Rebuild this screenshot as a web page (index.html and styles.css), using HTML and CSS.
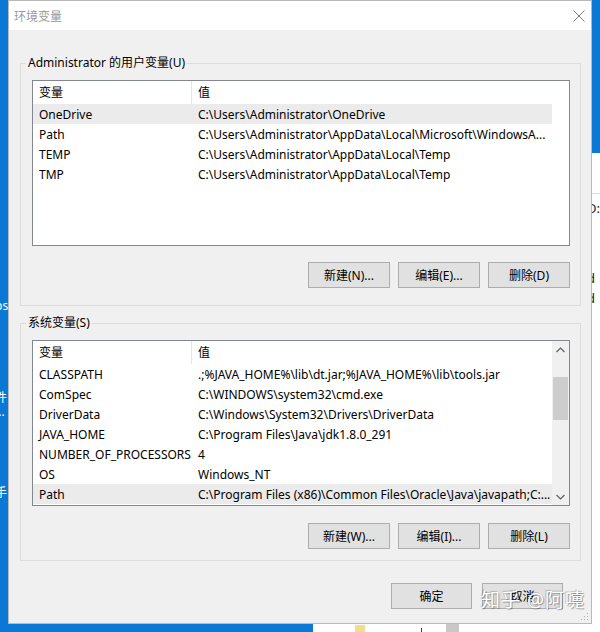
FILE: index.html
```html
<!DOCTYPE html>
<html lang="zh-CN">
<head>
    <meta charset="UTF-8">
    <title>环境变量</title>
    <link rel="stylesheet" href="styles.css">
</head>
<body>
    <div class="desktop">
        <span class="desk-label" style="top: 298px">ps</span>
        <span class="desk-label" style="top: 390px">件</span>
        <span class="desk-label" style="top: 404px">...</span>
        <span class="desk-label" style="top: 485px">手</span>

        <div class="back-window">
            <div class="back-rule"></div>
            <p class="back-text" style="top: 47px">D:</p>
            <p class="back-text" style="top: 117px">d</p>
            <p class="back-text" style="top: 137px">d</p>
            <span class="back-folder"></span>
            <span class="back-tick"></span>
            <span class="back-block"></span>
        </div>

        <div class="dialog">
            <div class="titlebar">
                <span class="title">环境变量</span>
                <svg class="close" width="12" height="12" viewBox="0 0 12 12">
                    <path d="M0.5 0.5 L11.5 11.5 M11.5 0.5 L0.5 11.5" stroke="#7a7a7a" stroke-width="1" fill="none"/>
                </svg>
            </div>

            <div class="dialog-body">
                <fieldset class="group group-user">
                    <legend>Administrator 的用户变量(U)</legend>
                    <div class="listview">
                        <div class="list-main">
                            <div class="list-head">
                                <div class="col-name">变量</div>
                                <div class="col-value">值</div>
                            </div>
                            <div class="row selected"><div class="col-name">OneDrive</div><div class="col-value">C:\Users\Administrator\OneDrive</div></div>
                            <div class="row"><div class="col-name">Path</div><div class="col-value">C:\Users\Administrator\AppData\Local\Microsoft\WindowsA...</div></div>
                            <div class="row"><div class="col-name">TEMP</div><div class="col-value">C:\Users\Administrator\AppData\Local\Temp</div></div>
                            <div class="row"><div class="col-name">TMP</div><div class="col-value">C:\Users\Administrator\AppData\Local\Temp</div></div>
                        </div>
                        <div class="list-spacer"></div>
                    </div>
                    <div class="btn-row">
                        <button class="btn">新建(N)...</button>
                        <button class="btn">编辑(E)...</button>
                        <button class="btn">删除(D)</button>
                    </div>
                </fieldset>

                <fieldset class="group group-system">
                    <legend>系统变量(S)</legend>
                    <div class="listview">
                        <div class="list-main">
                            <div class="list-head">
                                <div class="col-name">变量</div>
                                <div class="col-value">值</div>
                            </div>
                            <div class="row"><div class="col-name">CLASSPATH</div><div class="col-value">.;%JAVA_HOME%\lib\dt.jar;%JAVA_HOME%\lib\tools.jar</div></div>
                            <div class="row"><div class="col-name">ComSpec</div><div class="col-value">C:\WINDOWS\system32\cmd.exe</div></div>
                            <div class="row"><div class="col-name">DriverData</div><div class="col-value">C:\Windows\System32\Drivers\DriverData</div></div>
                            <div class="row"><div class="col-name">JAVA_HOME</div><div class="col-value">C:\Program Files\Java\jdk1.8.0_291</div></div>
                            <div class="row"><div class="col-name">NUMBER_OF_PROCESSORS</div><div class="col-value">4</div></div>
                            <div class="row"><div class="col-name">OS</div><div class="col-value">Windows_NT</div></div>
                            <div class="row selected"><div class="col-name">Path</div><div class="col-value">C:\Program Files (x86)\Common Files\Oracle\Java\javapath;C:...</div></div>
                        </div>
                        <div class="vscroll">
                            <div class="arrow">
                                <svg width="9" height="6" viewBox="0 0 9 6"><path d="M0.5 5 L4.5 1 L8.5 5" stroke="#606060" stroke-width="1.2" fill="none"/></svg>
                            </div>
                            <div class="track"><div class="thumb"></div></div>
                            <div class="arrow">
                                <svg width="9" height="6" viewBox="0 0 9 6"><path d="M0.5 1 L4.5 5 L8.5 1" stroke="#606060" stroke-width="1.2" fill="none"/></svg>
                            </div>
                        </div>
                    </div>
                    <div class="btn-row">
                        <button class="btn">新建(W)...</button>
                        <button class="btn">编辑(I)...</button>
                        <button class="btn">删除(L)</button>
                    </div>
                </fieldset>

                <div class="dialog-buttons">
                    <button class="btn btn-wide">确定</button>
                    <button class="btn btn-wide">取消</button>
                </div>
            </div>

            <span class="watermark">知乎 @阿嚏</span>
            <svg class="grip" width="8" height="8" viewBox="0 0 8 8">
                <rect x="6" y="0" width="1" height="1" fill="#b0b0b0"/>
                <rect x="3" y="3" width="1" height="1" fill="#b0b0b0"/>
                <rect x="6" y="3" width="1" height="1" fill="#b0b0b0"/>
                <rect x="0" y="6" width="1" height="1" fill="#b0b0b0"/>
                <rect x="3" y="6" width="1" height="1" fill="#b0b0b0"/>
                <rect x="6" y="6" width="1" height="1" fill="#b0b0b0"/>
            </svg>
        </div>
    </div>
</body>
</html>
```

FILE: styles.css
```css
body {
    margin: 0;
    padding: 0;
    font-family: "Noto Sans", "Noto Sans CJK SC", sans-serif;
    font-size: 12px;
    color: #000;
    overflow: hidden;
}
.desktop {
    position: relative;
    width: 600px;
    height: 632px;
    background-color: #0a78d4; /* bleu bureau */
    overflow: hidden;
}
.desk-label {
    position: absolute;
    left: -5px;
    color: #fff;
    font-size: 12px;
    line-height: 16px;
}

/* fenetre derriere le dialogue */
.back-window {
    position: absolute;
    left: 313px;
    top: 153px;
    right: 0;
    bottom: 0;
    background-color: #fff;
}
.back-rule {
    position: absolute;
    left: 270px;
    right: 0;
    top: 40px;
    height: 1px;
    background-color: #d9d9d9;
}
.back-text {
    position: absolute;
    left: 274px;
    margin: 0;
    font-size: 13px;
    line-height: 16px;
    color: #222;
}
.back-folder {
    position: absolute;
    left: 42px;
    top: 472px;
    width: 10px;
    height: 8px;
    background-color: #f3dc8a;
}
.back-tick {
    position: absolute;
    left: 108px;
    top: 475px;
    width: 1px;
    height: 4px;
    background-color: #444;
}
.back-block {
    position: absolute;
    left: 133px;
    top: 471px;
    width: 13px;
    height: 8px;
    background-color: #c8c8c8;
}

/* dialogue */
.dialog {
    position: absolute;
    left: 8px;
    top: 0;
    width: 584px;
    height: 624px;
    box-sizing: border-box;
    border: 1px solid #b9b9b9;
    display: flex;
    flex-direction: column;
    background-color: #f0f0f0;
}
.titlebar {
    height: 29px;
    background-color: #fff;
    display: flex;
    align-items: center;
    justify-content: space-between;
    padding: 0 6px 0 5px;
    flex-shrink: 0;
}
.title {
    color: #999;
    font-size: 12px;
}
.dialog-body {
    flex: 1;
    padding: 25px 10px 0 11px;
}
.group {
    margin: 0;
    border: 1px solid #dcdcdc;
    padding: 9px 10px 17px 11px;
}
.group legend {
    padding: 0 2px;
    margin-left: -6px;
    line-height: 16px;
}
.group-system {
    margin-top: 9px;
    padding-bottom: 11px;
}
.listview {
    height: 166px;
    box-sizing: border-box;
    border: 1px solid #828790;
    background-color: #fff;
    display: flex;
}
.list-main {
    width: 519px;
    overflow: hidden;
}
.list-spacer {
    flex: 1;
}
.list-head {
    display: flex;
    height: 23px;
    line-height: 24px;
}
.list-head .col-name {
    border-right: 1px solid #e5e5e5;
}
.row {
    display: flex;
    height: 20px;
    line-height: 22px;
}
.row.selected {
    background-color: #ebebeb;
}
.col-name {
    width: 159px;
    height: 100%;
    padding-left: 6px;
    box-sizing: border-box;
    white-space: nowrap;
    overflow: hidden;
    flex-shrink: 0;
}
.col-value {
    flex: 1;
    height: 100%;
    padding-left: 6px;
    white-space: nowrap;
    overflow: hidden;
}
.vscroll {
    width: 17px;
    background-color: #f0f0f0;
    display: flex;
    flex-direction: column;
}
.vscroll .arrow {
    height: 17px;
    display: flex;
    align-items: center;
    justify-content: center;
}
.vscroll .track {
    flex: 1;
    padding: 0 1px;
}
.vscroll .thumb {
    margin-top: 19px;
    height: 43px;
    background-color: #cdcdcd;
}
.btn-row {
    display: flex;
    justify-content: flex-end;
    gap: 8px;
    margin-top: 16px;
}
.group-system .btn-row {
    margin-top: 17px;
}
.btn {
    width: 82px;
    height: 26px;
    box-sizing: border-box;
    border: 1px solid #adadad;
    background-color: #e1e1e1;
    font-family: inherit;
    font-size: 12px;
    color: #000;
    padding: 0;
}
.dialog-buttons {
    display: flex;
    justify-content: flex-end;
    gap: 10px;
    margin: 22px 18px 0 0;
}
.btn-wide {
    width: 81px;
}
.watermark {
    position: absolute;
    right: 6px;
    bottom: 10px;
    font-size: 19px;
    letter-spacing: 1px;
    color: #fff;
    text-shadow: 1px 1px 1px rgba(0, 0, 0, 0.35), -1px -1px 1px rgba(0, 0, 0, 0.2);
}
.grip {
    position: absolute;
    right: 2px;
    bottom: 2px;
}
```
